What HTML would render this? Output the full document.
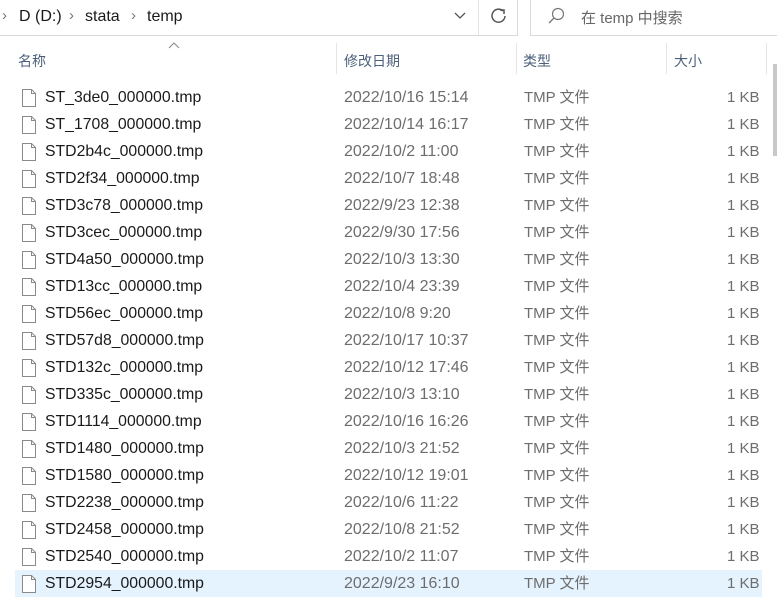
<!DOCTYPE html>
<html><head><meta charset="utf-8"><style>
body{margin:0;width:777px;height:599px;background:#fff;overflow:hidden;font-family:"Liberation Sans","Noto Sans CJK SC",sans-serif;color:#1a1a1a;position:relative}
.a{position:absolute;white-space:nowrap}
.row{position:absolute;left:15px;width:747px;height:27px;font-size:16px}
.row span{position:absolute;top:0;line-height:27px;height:27px}
.hd{font-size:14px;color:#4c607a;top:51px}
.sep{position:absolute;width:1px;background:#e5e5e5}
</style></head><body>
<div class="a" style="left:0;top:35px;width:518px;height:1px;background:#d9d9d9"></div>
<div class="a" style="left:530px;top:0;width:1px;height:35px;background:#d9d9d9"></div>
<div class="a" style="left:530px;top:35px;width:247px;height:1px;background:#d9d9d9"></div>
<div class="a" style="left:517px;top:0;width:1px;height:35px;background:#d9d9d9"></div>
<div class="a" style="left:478px;top:0;width:1px;height:35px;background:#e5e5e5"></div>
<div class="a" style="left:2px;top:7px;font-size:15px;color:#777">›</div>
<div class="a" style="left:19px;top:8px;font-size:16px">D (D:)</div>
<div class="a" style="left:69px;top:7px;font-size:15px;color:#777">›</div>
<div class="a" style="left:85px;top:8px;font-size:16px">stata</div>
<div class="a" style="left:131px;top:7px;font-size:15px;color:#777">›</div>
<div class="a" style="left:147px;top:8px;font-size:16px">temp</div>
<svg class="a" style="left:454px;top:12px" width="12" height="8"><path d="M1 1l5 5 5-5" stroke="#555" fill="none" stroke-width="1.3"/></svg>
<svg class="a" style="left:490px;top:7px" width="18" height="18"><path d="M13 4A6.5 6.5 0 1 0 15 9" stroke="#555" fill="none" stroke-width="1.5"/><path d="M10 3h4v4" stroke="#555" fill="none" stroke-width="1.5"/></svg>
<svg class="a" style="left:547px;top:6px" width="20" height="20"><circle cx="11" cy="8" r="5.5" stroke="#777" fill="none" stroke-width="1.2"/><path d="M7 12l-5 5" stroke="#777" stroke-width="1.3"/></svg>
<div class="a" style="left:581px;top:7px;font-size:15px;color:#666">在 temp 中搜索</div>
<svg class="a" style="left:168px;top:42px" width="12" height="7"><path d="M1 6l5-5 5 5" stroke="#888" fill="none" stroke-width="1"/></svg>
<div class="a hd" style="left:18px">名称</div>
<div class="a hd" style="left:344px">修改日期</div>
<div class="a hd" style="left:523px">类型</div>
<div class="a hd" style="left:674px">大小</div>
<div class="sep" style="left:336px;top:43px;height:31px"></div>
<div class="sep" style="left:516px;top:43px;height:31px"></div>
<div class="sep" style="left:666px;top:43px;height:31px"></div>
<div class="sep" style="left:766px;top:43px;height:31px"></div>
<div class="a" style="left:773px;top:64px;width:4px;height:92px;background:#c8c8c8"></div>
<div id="rows"></div>
<script>
var d=[["ST_3de0","2022/10/16 15:14"],["ST_1708","2022/10/14 16:17"],["STD2b4c","2022/10/2 11:00"],["STD2f34","2022/10/7 18:48"],["STD3c78","2022/9/23 12:38"],["STD3cec","2022/9/30 17:56"],["STD4a50","2022/10/3 13:30"],["STD13cc","2022/10/4 23:39"],["STD56ec","2022/10/8 9:20"],["STD57d8","2022/10/17 10:37"],["STD132c","2022/10/12 17:46"],["STD335c","2022/10/3 13:10"],["STD1114","2022/10/16 16:26"],["STD1480","2022/10/3 21:52"],["STD1580","2022/10/12 19:01"],["STD2238","2022/10/6 11:22"],["STD2458","2022/10/8 21:52"],["STD2540","2022/10/2 11:07"],["STD2954","2022/9/23 16:10"]];
var h="";d.forEach(function(r,i){var t=84+i*27;h+='<div class="row" style="top:'+t+'px;'+(i==18?'background:#e5f3ff':'')+'"><svg style="position:absolute;left:7px;top:5px" width="14" height="18"><path d="M0.5 0.5h9l4 4v13h-13z" fill="#fff" stroke="#8a8a8a"/><path d="M9.5 0.5v4h4" fill="none" stroke="#8a8a8a"/></svg><span style="left:30px;font-size:15.8px">'+r[0]+'_000000.tmp</span><span style="left:329px;color:#6d6d6d">'+r[1]+'</span><span style="left:509px;color:#6d6d6d;font-size:15px">TMP 文件</span><span style="left:712px;color:#6d6d6d;font-size:15px">1 KB</span></div>'});
document.getElementById("rows").innerHTML=h;
</script>
</body></html>
